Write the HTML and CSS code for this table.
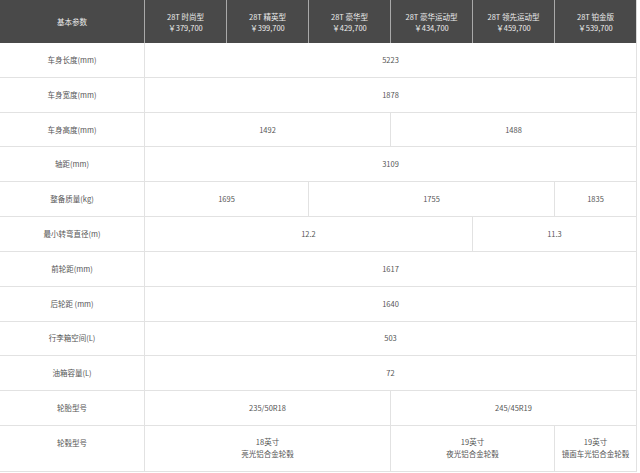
FILE: index.html
```html
<!DOCTYPE html>
<html lang="zh-CN">
<head>
<meta charset="utf-8">
<title>基本参数</title>
<link rel="stylesheet" href="styles.css">
</head>
<body>
<div class="spec">
  <div class="hd">基本参数</div>
  <div class="hd">28T 时尚型<br>￥379,700</div>
  <div class="hd">28T 精英型<br>￥399,700</div>
  <div class="hd">28T 豪华型<br>￥429,700</div>
  <div class="hd">28T 豪华运动型<br>￥434,700</div>
  <div class="hd">28T 领先运动型<br>￥459,700</div>
  <div class="hd last">28T 铂金版<br>￥539,700</div>

  <div class="lb">车身长度(mm)</div>
  <div class="c s6">5223</div>

  <div class="lb">车身宽度(mm)</div>
  <div class="c s6">1878</div>

  <div class="lb">车身高度(mm)</div>
  <div class="c s3">1492</div>
  <div class="c s3">1488</div>

  <div class="lb">轴距(mm)</div>
  <div class="c s6">3109</div>

  <div class="lb">整备质量(kg)</div>
  <div class="c s2">1695</div>
  <div class="c s3">1755</div>
  <div class="c">1835</div>

  <div class="lb">最小转弯直径(m)</div>
  <div class="c s4">12.2</div>
  <div class="c s2">11.3</div>

  <div class="lb">前轮距(mm)</div>
  <div class="c s6">1617</div>

  <div class="lb">后轮距 (mm)</div>
  <div class="c s6">1640</div>

  <div class="lb">行李箱空间(L)</div>
  <div class="c s6">503</div>

  <div class="lb">油箱容量(L)</div>
  <div class="c s6">72</div>

  <div class="lb">轮胎型号</div>
  <div class="c s3">235/50R18</div>
  <div class="c s3">245/45R19</div>

  <div class="lb top">轮毂型号</div>
  <div class="c s3">18英寸<br>亮光铝合金轮毂</div>
  <div class="c s2">19英寸<br>夜光铝合金轮毂</div>
  <div class="c">19英寸<br>镜面车光铝合金轮毂</div>
</div>
</body>
</html>
```
FILE: styles.css
```css
html, body {
  margin: 0;
  padding: 0;
  background: #ffffff;
}

body {
  width: 640px;
  height: 473px;
  overflow: hidden;
  font-family: "Noto Sans CJK SC", "Noto Sans", sans-serif;
  font-size: 7.5px;
  line-height: 12px;
}

.spec {
  display: grid;
  width: 637px;
  grid-template-columns: 145px repeat(6, 82px);
  grid-template-rows: 43px repeat(11, 34.82px) 46px;
}

.hd,
.lb,
.c {
  box-sizing: border-box;
  display: flex;
  align-items: center;
  justify-content: center;
  text-align: center;
}

.hd {
  background: #494949;
  color: #ececec;
  border-right: 1px solid #a9a9a9;
  line-height: 11px;
}

.hd.last {
  border-right: 1px solid #d8d8d8;
}

.lb,
.c {
  color: #555555;
  border-right: 1px solid #e2e2e2;
  border-bottom: 1px solid #e2e2e2;
}

.lb.top {
  align-items: flex-start;
  padding-top: 11px;
}

.s2 { grid-column: span 2; }
.s3 { grid-column: span 3; }
.s4 { grid-column: span 4; }
.s6 { grid-column: span 6; }
```
